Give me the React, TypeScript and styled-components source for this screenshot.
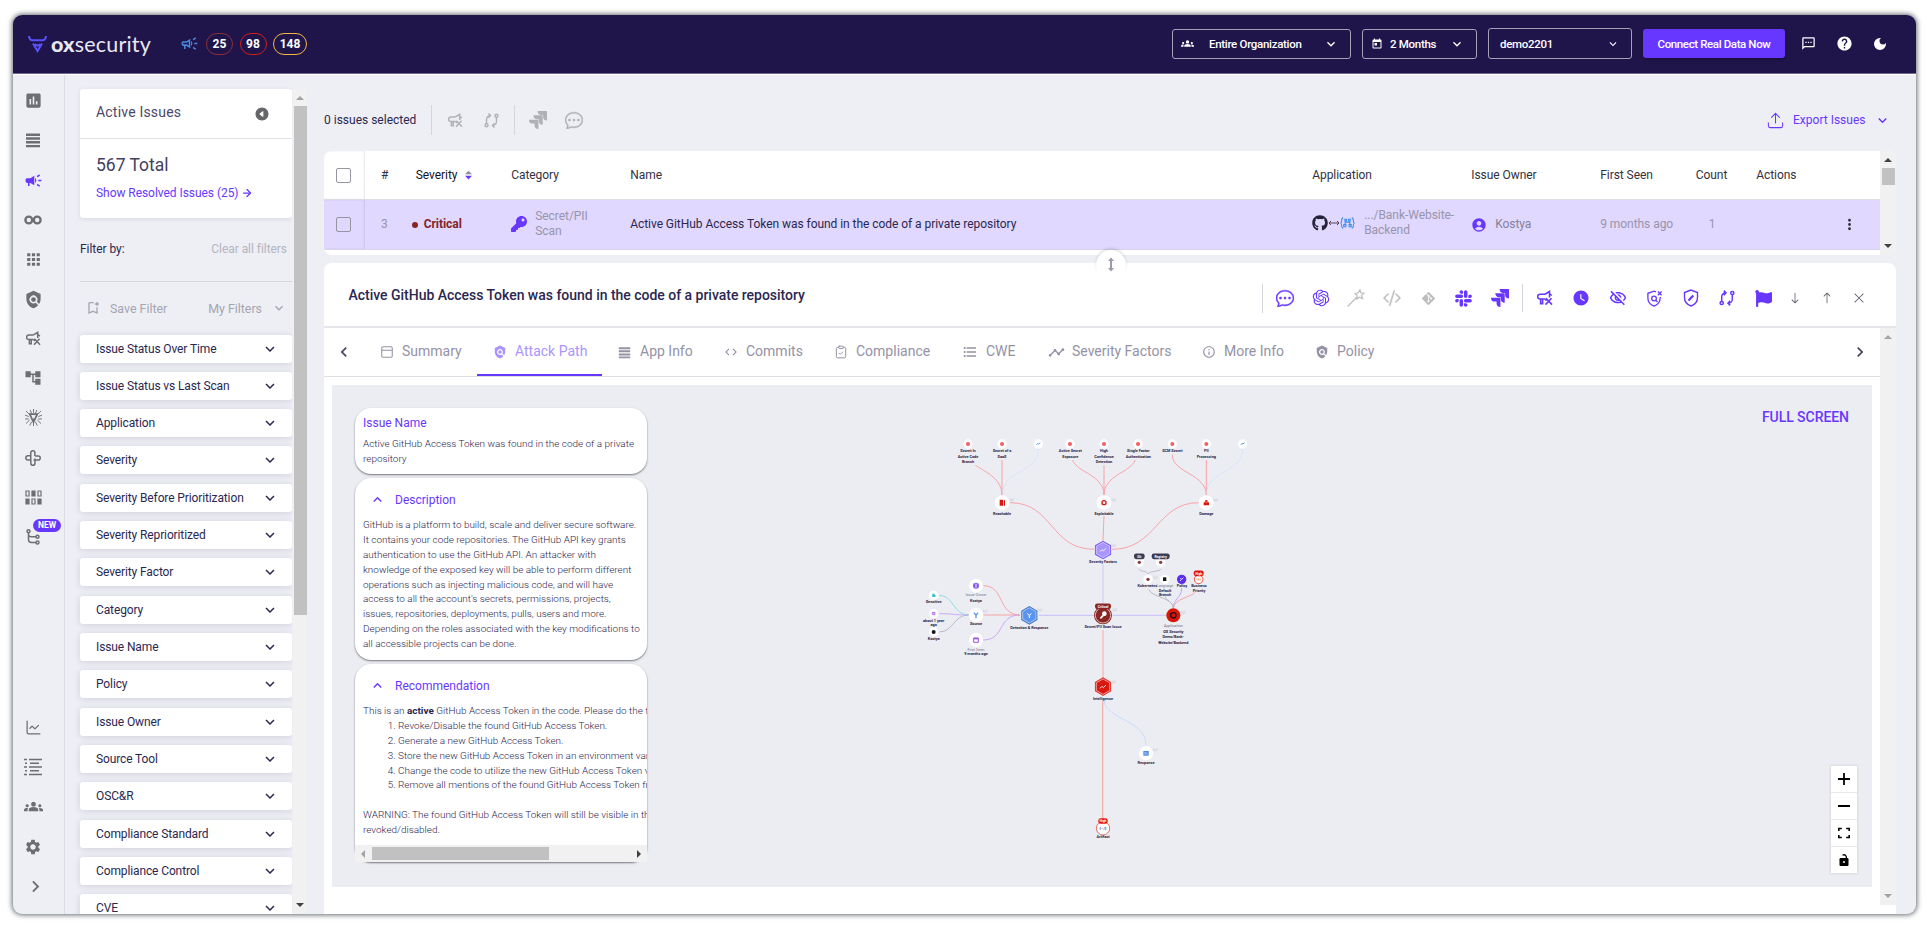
import type { ReactNode } from 'react';
import styled, { createGlobalStyle, css } from 'styled-components';
import {
    MdAccountCircle,
    MdAccountTree,
    MdApps,
    MdAssessment,
    MdCampaign,
    MdChevronLeft,
    MdChevronRight,
    MdCode,
    MdDarkMode,
    MdFormatListBulleted,
    MdGroups,
    MdHelp,
    MdInfoOutline,
    MdKeyboardArrowDown,
    MdKeyboardArrowUp,
    MdMoreVert,
    MdOutlineBookmarkAdd,
    MdOutlineCampaign,
    MdOutlineSms,
    MdOutlineVisibilityOff,
    MdPolicy,
    MdSettings,
    MdTimeline,
    MdToday,
    MdWatchLater,
} from 'react-icons/md';
import { BsArrowDown, BsArrowUp, BsChatDots, BsCodeSlash, BsXLg } from 'react-icons/bs';
import { FaFlag, FaGitAlt, FaGithub, FaKey, FaSlack } from 'react-icons/fa';
import { IoCaretBackCircle } from 'react-icons/io5';
import { RiOpenaiFill } from 'react-icons/ri';
import { ArrowRight, ChartLine, ClipboardCheck, PanelTop, Upload } from 'lucide-react';

const purple = '#6837ff';
const ink = '#2b2750';

/* ---------- custom icons ---------- */

type IconProps = { size?: number };

const JiraIcon = ({ size = 18 }: IconProps) => (
    <svg width={size} height={size} viewBox="0 0 24 24" fill="currentColor">
        <path d="M11.6 11.5H0a5.2 5.2 0 0 0 5.2 5.2h2.2v2.1A5.2 5.2 0 0 0 12.6 24V12.5a1 1 0 0 0-1-1zM17.3 5.8H5.7A5.2 5.2 0 0 0 11 11h2.1v2a5.2 5.2 0 0 0 5.2 5.2V6.8a1 1 0 0 0-1-1zM23 0H11.5a5.2 5.2 0 0 0 5.2 5.2h2.1v2.1A5.2 5.2 0 0 0 24 12.5V1a1 1 0 0 0-1-1z" />
    </svg>
);

const BarsIcon = ({ size = 16 }: IconProps) => (
    <svg width={size} height={size} viewBox="0 0 16 16" fill="currentColor">
        <path d="M1 1.5h14V4H1zM1 5.3h14v2.5H1zM1 9.1h14v2.5H1zM1 12.9h14v2.3H1z" />
    </svg>
);

const LoopIcon = ({ size = 18 }: IconProps) => (
    <svg width={size} height={size} viewBox="0 0 18 18" fill="none" stroke="currentColor" strokeWidth="2.4">
        <circle cx="4.8" cy="9" r="3.4" />
        <circle cx="13.2" cy="9" r="3.4" />
    </svg>
);

const MuteIcon = ({ size = 16 }: IconProps) => (
    <svg width={size} height={size} viewBox="0 0 16 16" fill="none" stroke="currentColor" strokeWidth="1.6">
        <path d="M8 4.2H3A1.6 1.6 0 0 0 3 9h5M8 4.2 12.5 1.5v6M3.6 9v4.6h2V9M8 9l1.6 1.6M8.5 14.6l6-6.4M9 8.2l6 6.4M13 4l1.8 1.5" />
    </svg>
);

const CycleIcon = ({ size = 16 }: IconProps) => (
    <svg width={size} height={size} viewBox="0 0 16 16" fill="none" stroke="currentColor" strokeWidth="1.5">
        <circle cx="2.7" cy="13" r="1.6" />
        <circle cx="13.3" cy="3" r="1.6" />
        <path d="M2.7 11.4V6.8a4 4 0 0 1 4-4M4.8.6 7 2.8 4.8 5.2M13.3 4.6v4.6a4 4 0 0 1-4 4M11.2 10.8 9 13.2l2.2 2.2" />
    </svg>
);

const BurstIcon = ({ size = 18 }: IconProps) => (
    <svg width={size} height={size} viewBox="0 0 18 18" stroke="currentColor" strokeWidth="1" fill="none">
        <path d="M9 0v4M5.5 1 7 5M12.5 1 11 5M1 2l4 4M17 2l-4 4M0 6.5l4 1.5M18 6.5 14 8M0 10.5h4M18 10.5h-4M1 15.5l4-4M17 15.5l-4-4M5 17.5l2-4M13 17.5l-2-4" />
        <path d="M5 5.5h8L9 14z" strokeWidth="1.8" />
        <path d="M9 10v8" />
    </svg>
);

const CloverIcon = ({ size = 17 }: IconProps) => (
    <svg width={size} height={size} viewBox="0 0 17 17" stroke="currentColor" strokeWidth="1.6" fill="none">
        <path d="M10.5 6.5V3a2.2 2.2 0 0 0-4.4 0v7.5M6.5 10.5H3a2.2 2.2 0 0 1 0-4.4h3M6.2 10.5V14a2.2 2.2 0 0 0 4.4 0V9M10.5 6.3H14a2.2 2.2 0 0 1 0 4.4H9" />
    </svg>
);

const BlocksIcon = ({ size = 17 }: IconProps) => (
    <svg width={size} height={size} viewBox="0 0 17 17" stroke="currentColor" strokeWidth="1.2" fill="none">
        <path d="M1 2h3v5H1zM13 2h3v5h-3zM7 10h3v5H7z" />
        <path d="M7 2h3v5H7zM1 10h3v5H1zM13 10h3v5h-3z" fill="currentColor" />
    </svg>
);

const BranchIcon = ({ size = 16 }: IconProps) => (
    <svg width={size} height={size} viewBox="0 0 16 16" stroke="currentColor" strokeWidth="1.5" fill="none">
        <circle cx="3.5" cy="2.3" r="1.5" />
        <circle cx="12.5" cy="7.8" r="1.5" />
        <circle cx="12.5" cy="13.5" r="1.5" />
        <path d="M3.5 4v6.5a3 3 0 0 0 3 3H11M3.5 5.5c0 1.5 1.5 2.3 3 2.3H11" />
    </svg>
);

const OutlineListIcon = ({ size = 18 }: IconProps) => (
    <svg width={size} height={size} viewBox="0 0 18 18" stroke="currentColor" strokeWidth="1.4" fill="none">
        <path d="M0 1.5h3M5 1.5h13M6 5.2h9M0 9h3M5 9h13M6 12.8h9M0 16.5h3M5 16.5h13M1 5.2h2M1 12.8h2" />
    </svg>
);

const WandIcon = ({ size = 18 }: IconProps) => (
    <svg width={size} height={size} viewBox="0 0 18 18" stroke="currentColor" strokeWidth="1.2" fill="none">
        <path d="M.5 17.5 10 8M13 .8l.7 3 3.3.4-2.4 2.2 1 3.2-3-1.3-2.7 1.7.3-3.4L8 4.5l3.2-.7z" />
    </svg>
);

const ShieldEditIcon = ({ size = 18 }: IconProps) => (
    <svg width={size} height={size} viewBox="0 0 18 18" stroke="currentColor" strokeWidth="1.4" fill="none">
        <path d="M9 1 2.5 3.5v5c0 4.2 3 7.3 6.5 8.5 3.5-1.2 6.5-4.3 6.5-8.5v-5z" />
        <path d="m6.5 11.5 4.8-5" strokeWidth="2.2" />
    </svg>
);

const ShieldOffIcon = ({ size = 18 }: IconProps) => (
    <svg width={size} height={size} viewBox="0 0 18 18" stroke="currentColor" strokeWidth="1.4" fill="none">
        <path d="M10.5 2 8.5 1.2 2 3.5v5c0 4.2 3 7.3 6.5 8.5 3.5-1.2 6.5-4.3 6.5-8.5v-1M12.5 1.5l4 4M16.5 1.5l-4 4" />
        <circle cx="8.5" cy="9" r="2.5" />
        <path d="m10.2 10.8 2 2" />
    </svg>
);

const OxMark = () => (
    <svg width="19" height="18" viewBox="0 0 19 18" fill="none" stroke="#5a52ff" strokeWidth="2">
        <path d="M1 1c.2 3 1.5 4.3 4 4.3h9c2.5 0 3.8-1.3 4-4.3" />
        <path d="M5 8.5 9.5 16 14 8.5M6.8 9.3l2.7 1.3 2.7-1.3" />
    </svg>
);

/* ---------- data ---------- */

const navTop: ReactNode[] = [
    <MdAssessment size={19} />,
    <BarsIcon size={16} />,
    <MdCampaign size={19} />,
    <LoopIcon size={18} />,
    <MdApps size={19} />,
    <MdPolicy size={19} />,
    <MuteIcon size={15} />,
    <MdAccountTree size={18} />,
    <BurstIcon size={17} />,
    <CloverIcon size={16} />,
    <BlocksIcon size={17} />,
    <BranchIcon size={16} />,
];

const navBottom: ReactNode[] = [
    <ChartLine size={17} strokeWidth={1.8} />,
    <OutlineListIcon size={18} />,
    <MdGroups size={19} />,
    <MdSettings size={18} />,
    <MdChevronRight size={23} />,
];

const filters = [
    'Issue Status Over Time',
    'Issue Status vs Last Scan',
    'Application',
    'Severity',
    'Severity Before Prioritization',
    'Severity Reprioritized',
    'Severity Factor',
    'Category',
    'Issue Name',
    'Policy',
    'Issue Owner',
    'Source Tool',
    'OSC&R',
    'Compliance Standard',
    'Compliance Control',
    'CVE',
];

const tabs: { label: string; width: number; icon: ReactNode; slot?: number }[] = [
    { label: 'Summary', width: 113, icon: <PanelTop size={14} strokeWidth={1.8} /> },
    { label: 'Attack Path', width: 125, icon: <MdPolicy size={14} /> },
    { label: 'App Info', width: 106, icon: <BarsIcon size={13} /> },
    { label: 'Commits', width: 110, icon: <MdCode size={14} /> },
    { label: 'Compliance', width: 128, icon: <ClipboardCheck size={14} strokeWidth={1.7} /> },
    { label: 'CWE', width: 86, icon: <MdFormatListBulleted size={16} />, slot: 24 },
    { label: 'Severity Factors', width: 154, icon: <MdTimeline size={17} />, slot: 24 },
    { label: 'More Info', width: 113, icon: <MdInfoOutline size={14} /> },
    { label: 'Policy', width: 92, icon: <MdPolicy size={14} /> },
];

const integrations: { icon: ReactNode; muted?: boolean }[] = [
    { icon: <BsChatDots size={18} strokeWidth={0.4} stroke="currentColor" /> },
    { icon: <RiOpenaiFill size={20} /> },
    { icon: <WandIcon size={18} />, muted: true },
    { icon: <BsCodeSlash size={18} strokeWidth={0.4} stroke="currentColor" />, muted: true },
    { icon: <FaGitAlt size={15} />, muted: true },
    { icon: <FaSlack size={19} /> },
    { icon: <JiraIcon size={18} /> },
];

const issueActions: ReactNode[] = [
    <MuteIcon size={16} />,
    <MdWatchLater size={18} />,
    <MdOutlineVisibilityOff size={18} />,
    <ShieldOffIcon size={17} />,
    <ShieldEditIcon size={18} />,
    <CycleIcon size={16} />,
    <FaFlag size={17} />,
];

/* ---------- attack path graph ---------- */

const RED = '#f7a3a6';
const BLUE = '#c9dcfb';
const LILAC = '#cdc8fa';

const edges: { d: string; color: string; dash?: boolean; width?: number }[] = [
    { d: 'M196 136C232 158 276 178 276 226', color: RED },
    { d: 'M276 120V226', color: RED },
    { d: 'M385 88C385 160 276 150 278 222', color: BLUE, dash: true },
    { d: 'M487 120C505 160 582 165 582 226', color: RED },
    { d: 'M582 136V226', color: RED },
    { d: 'M676 120C658 160 582 165 582 226', color: RED },
    { d: 'M787 104C787 160 889 160 889 226', color: RED },
    { d: 'M889 120V226', color: RED },
    { d: 'M998 88C998 160 889 150 890 222', color: BLUE, dash: true },
    { d: 'M300 248C430 248 420 388 552 388', color: RED },
    { d: 'M582 288 579 362', color: RED },
    { d: 'M866 248C740 248 740 388 606 388', color: RED },
    { d: 'M579 434V550', color: LILAC },
    { d: 'M386 586H550', color: LILAC, width: 4 },
    { d: 'M608 586H768', color: LILAC, width: 4 },
    { d: 'M220 497C285 497 262 585 330 585', color: RED },
    { d: 'M220 585H330', color: RED },
    { d: 'M220 660C285 660 262 585 330 585', color: '#c9a8f5' },
    { d: 'M88 526C130 526 130 585 176 585', color: '#8fdbe6' },
    { d: 'M88 581C130 581 130 585 176 585', color: '#c9a8f5' },
    { d: 'M88 636C130 636 130 585 176 585', color: '#b9bac6' },
    { d: 'M686 446C690 456 712 452 714 462', color: '#b9bac6' },
    { d: 'M754 446C750 456 718 452 714 462', color: '#b9bac6' },
    { d: 'M716 508C728 535 788 530 790 565', color: '#b9bac6' },
    { d: 'M766 530C770 545 790 545 790 565', color: '#b9bac6' },
    { d: 'M815 504C815 535 790 535 790 565', color: '#b9a6fb' },
    { d: 'M856 516C845 532 792 535 790 565', color: RED },
    { d: 'M579 630V774', color: '#f7c3c6', width: 5 },
    { d: 'M578 842V1196', color: '#efb0b0', width: 4 },
    { d: 'M582 842C590 900 708 900 708 976', color: BLUE },
];

const labels: { x: number; y: number; lines: string[]; gap?: number; muted?: boolean }[] = [
    { x: 174, y: 97, lines: ['Secret In', 'Active Code', 'Branch'] },
    { x: 276, y: 97, lines: ['Secret of a', 'SaaS'] },
    { x: 481, y: 97, lines: ['Active Secret', 'Exposure'] },
    { x: 582, y: 97, lines: ['High', 'Confidence', 'Detection'] },
    { x: 685, y: 97, lines: ['Single Factor', 'Authentication'] },
    { x: 787, y: 97, lines: ['SCM Secret'] },
    { x: 889, y: 97, lines: ['PII', 'Processing'] },
    { x: 276, y: 285, lines: ['Reachable'] },
    { x: 582, y: 285, lines: ['Exploitable'] },
    { x: 889, y: 285, lines: ['Damage'] },
    { x: 579, y: 430, lines: ['Severity Factors'] },
    { x: 579, y: 624, lines: ['Secret/PII Scan Issue'] },
    { x: 358, y: 626, lines: ['Detection & Response'] },
    { x: 198, y: 529, lines: ['Issue Owner'], muted: true },
    { x: 198, y: 545, lines: ['Kostya'] },
    { x: 198, y: 615, lines: ['Source'] },
    { x: 198, y: 692, lines: ['First Seen'], muted: true },
    { x: 198, y: 705, lines: ['9 months ago'] },
    { x: 71, y: 550, lines: ['Sensitive'] },
    { x: 71, y: 607, lines: ['about 1 year', 'ago'], gap: 12 },
    { x: 71, y: 660, lines: ['Kostya'] },
    { x: 790, y: 621, lines: ['Application'], muted: true },
    { x: 790, y: 638, lines: ['OX Security', 'Demo/Bank-', 'Website/Backend'] },
    { x: 712, y: 502, lines: ['Kubernetes'] },
    { x: 765, y: 502, lines: ['Language'], muted: true },
    { x: 765, y: 517, lines: ['Default', 'Branch'], gap: 12 },
    { x: 816, y: 502, lines: ['Policy'] },
    { x: 867, y: 502, lines: ['Business', 'Priority'], gap: 13 },
    { x: 579, y: 841, lines: ['Intelligence'] },
    { x: 708, y: 1032, lines: ['Response'] },
    { x: 579, y: 1255, lines: ['Artifact'] },
];

const redLeaves = [174, 276, 480, 582, 684, 787, 889];
const blueLeaves = [385, 998];
const markers = [
    [305, 238],
    [611, 238],
    [917, 238],
    [611, 375],
    [614, 568],
    [389, 569],
    [226, 572],
    [736, 471],
    [820, 576],
    [611, 784],
    [736, 988],
];

const hexagon = (x: number, y: number, r: number) =>
    [0, 1, 2, 3, 4, 5]
        .map((i) => {
            const a = Math.PI / 6 + (i * Math.PI) / 3;
            return `${(x + r * Math.cos(a)).toFixed(1)},${(y + r * Math.sin(a)).toFixed(1)}`;
        })
        .join(' ');

const Hex = ({ x, y, fill, border }: { x: number; y: number; fill: string; border: string }) => (
    <>
        <polygon points={hexagon(x, y, 28)} fill={border} />
        <polygon points={hexagon(x, y, 23)} fill={fill} stroke="#fff" strokeOpacity="0.8" strokeWidth="2" />
    </>
);

const Badge = ({ x, y, w, fill, text }: { x: number; y: number; w: number; fill: string; text: string }) => (
    <>
        <rect x={x - w / 2} y={y - 8.5} width={w} height={17} rx={7} fill={fill} />
        <BadgeText x={x} y={y + 4}>
            {text}
        </BadgeText>
    </>
);

const AttackGraph = () => (
    <Graph viewBox="0 0 1540 502">
        <g transform="translate(578 35) scale(.33333)">
            {edges.map((e) => (
                <path
                    key={e.d}
                    d={e.d}
                    fill="none"
                    stroke={e.color}
                    strokeWidth={e.width ?? 3}
                    strokeDasharray={e.dash ? '5 4' : undefined}
                />
            ))}
            {redLeaves.map((x) => (
                <g key={x}>
                    <circle cx={x} cy={72} r={14} fill="#fff" />
                    <circle cx={x} cy={72} r={6} fill="#f95c5f" />
                </g>
            ))}
            {blueLeaves.map((x) => (
                <g key={x}>
                    <circle cx={x} cy={72} r={14} fill="#fff" />
                    <path d={`M${x - 6} 74l4-3 3 1 5-4`} stroke="#5b97f0" strokeWidth="3" fill="none" />
                </g>
            ))}
            {[276, 582, 889].map((x) => (
                <circle key={x} cx={x} cy={248} r={22} fill="#fff" />
            ))}
            <path d="M269 239h10v18h-10zM281 241h4v16h-4z" fill="#d9180f" />
            <circle cx={582} cy={248} r={6} fill="none" stroke="#d9180f" strokeWidth="4" />
            <path d="M881 247h16v9h-16zM884 245a5 5 0 0 1 10 0z" fill="#d9180f" />

            <Hex x={579} y={390} fill="#a995ff" border="#7f59fb" />
            <path d="M570 395l6-6 4 4 8-8" stroke="#fff" strokeWidth="2.5" fill="none" />
            <Hex x={358} y={586} fill="#5a94ee" border="#3f76c4" />
            <path d="M352 580l6 7 6-7M358 587v7" stroke="#fff" strokeWidth="3" fill="none" />
            <Hex x={579} y={800} fill="#d9180f" border="#e2322a" />
            <path d="M570 805l6-6 4 4 8-8" stroke="#fff" strokeWidth="2.5" fill="none" />

            <circle cx={579} cy={586} r={27} fill="#8a2626" />
            <circle cx={579} cy={586} r={23} fill="none" stroke="#fff" strokeWidth="2" />
            <path d="M571 595l9-9" stroke="#fff" strokeWidth="5" />
            <circle cx={583} cy={581} r={7} fill="#fff" />
            <Badge x={579} y={559} w={48} fill="#8a2626" text="Critical" />

            <circle cx={198} cy={497} r={21} fill="#fff" />
            <circle cx={198} cy={497} r={9} fill="#8257f7" />
            <path d="M198 491v12" stroke="#fff" strokeWidth="3" />
            <circle cx={198} cy={585} r={21} fill="#fff" />
            <path d="M192 578l6 8 6-8M198 586v9" stroke="#5a94ee" strokeWidth="4" fill="none" />
            <circle cx={198} cy={660} r={21} fill="#fff" />
            <path d="M191 654h14v13h-14z" stroke="#a04fe6" strokeWidth="3" fill="none" />
            <path d="M191 656h14" stroke="#a04fe6" strokeWidth="4" />

            <circle cx={71} cy={526} r={14} fill="#fff" />
            <path d="M67 521h5l4 5v5h-9z" fill="#22c3cf" />
            <circle cx={71} cy={581} r={14} fill="#fff" />
            <path d="M67 577h8v7h-8z" fill="#d9b8f7" stroke="#a04fe6" strokeWidth="2" />
            <circle cx={71} cy={636} r={14} fill="#fff" />
            <circle cx={71} cy={636} r={6} fill="#161616" />

            <circle cx={790} cy={586} r={21} fill="#dc1507" />
            <circle cx={790} cy={586} r={8} fill="none" stroke="#14101c" strokeWidth="4" />

            {[688, 752].map((x) => (
                <g key={x}>
                    <circle cx={x} cy={427} r={14} fill="#fff" />
                    <circle cx={x} cy={427} r={5} fill="#8a3a3a" />
                </g>
            ))}
            <Badge x={688} y={409} w={32} fill="#3c3a50" text="Git" />
            <Badge x={752} y={409} w={54} fill="#3c3a50" text="Registry" />
            <circle cx={714} cy={478} r={14} fill="#fff" />
            <circle cx={714} cy={478} r={5} fill="#8a3a3a" />
            <circle cx={764} cy={478} r={14} fill="#fff" />
            <path d="M759 472h10v11h-10z" fill="#161616" />
            <circle cx={815} cy={478} r={14} fill="#5b2df0" />
            <path d="M810 483l10-10M811 474l3 3" stroke="#fff" strokeWidth="2.5" />
            <circle cx={866} cy={478} r={13} fill="#fff" stroke="#e2322a" strokeWidth="2.5" />
            <path d="M860 478h12" stroke="#f39a4c" strokeWidth="5" strokeDasharray="3 1.5" />
            <Badge x={866} y={460} w={30} fill="#dc1507" text="High" />

            <circle cx={708} cy={1000} r={21} fill="#fff" />
            <rect x={700} y={993} width={16} height={14} fill="#4b86ea" />
            <path d="M703 998h7M703 1002h10" stroke="#fff" strokeWidth="1.5" />
            <circle cx={579} cy={1225} r={20} fill="#fff" stroke="#e2504a" strokeWidth="2.5" />
            <MarkText x={579} y={1230}>
                {'{··/}'}
            </MarkText>
            <Badge x={579} y={1203} w={28} fill="#dc1507" text="High" />

            {markers.map(([x, y]) => (
                <path
                    key={`${x}-${y}`}
                    d={`M${x - 5} ${y - 4}v8h10v-8M${x - 2} ${y}h4`}
                    stroke="#c2c3cc"
                    strokeWidth="1.5"
                    fill="none"
                />
            ))}
            {labels.map((l) =>
                l.lines.map((line, i) => (
                    <NodeLabel key={`${l.x}-${l.y}-${line}`} x={l.x} y={l.y + i * (l.gap ?? 16.5)} $muted={l.muted}>
                        {line}
                    </NodeLabel>
                )),
            )}
        </g>
    </Graph>
);

/* ---------- page ---------- */

function App() {
    return (
        <Page>
            <GlobalStyle />
            <Window>
                <Header>
                    <Logo>
                        <OxMark />
                        <Wordmark>
                            <b>ox</b>security
                        </Wordmark>
                    </Logo>
                    <HeaderCampaign>
                        <MdOutlineCampaign size={19} />
                    </HeaderCampaign>
                    <Pill $color="#8c2f35">25</Pill>
                    <Pill $color="#d51d12">98</Pill>
                    <Pill $color="#f4b740" $wide>
                        148
                    </Pill>
                    <HeaderRight>
                        <Select $width={179}>
                            <MdGroups size={13} />
                            <SelectLabel $indent={15}>Entire Organization</SelectLabel>
                            <MdKeyboardArrowDown size={16} />
                        </Select>
                        <Select $width={115}>
                            <MdToday size={12} />
                            <SelectLabel $indent={7}>2 Months</SelectLabel>
                            <MdKeyboardArrowDown size={16} />
                        </Select>
                        <Select $width={144} $tall>
                            <SelectLabel $indent={3}>demo2201</SelectLabel>
                            <MdKeyboardArrowDown size={14} />
                        </Select>
                        <ConnectButton>Connect Real Data Now</ConnectButton>
                        <HeaderIcons>
                            <span>
                                <MdOutlineSms size={15} />
                            </span>
                            <span>
                                <MdHelp size={17} />
                            </span>
                            <span>
                                <MdDarkMode size={16} />
                            </span>
                        </HeaderIcons>
                    </HeaderRight>
                </Header>
                <Body>
                    <Nav>
                        <div>
                            {navTop.map((icon, i) => (
                                <NavItem key={i} $active={i === 2}>
                                    {icon}
                                    {i === navTop.length - 1 && <NewBadge>NEW</NewBadge>}
                                </NavItem>
                            ))}
                        </div>
                        <NavBottom>
                            {navBottom.map((icon, i) => (
                                <NavItem key={i}>{icon}</NavItem>
                            ))}
                        </NavBottom>
                    </Nav>
                    <Sidebar>
                        <TotalsCard>
                            <TotalsHead>
                                Active Issues
                                <IoCaretBackCircle size={16} />
                            </TotalsHead>
                            <TotalsBody>
                                <Total>567 Total</Total>
                                <ResolvedLink>
                                    Show Resolved Issues (25)
                                    <ArrowRight size={12} strokeWidth={2.5} />
                                </ResolvedLink>
                            </TotalsBody>
                        </TotalsCard>
                        <FilterBy>
                            Filter by:
                            <span>Clear all filters</span>
                        </FilterBy>
                        <FilterTools>
                            <MdOutlineBookmarkAdd size={16} />
                            <span>Save Filter</span>
                            <em>My Filters</em>
                            <MdKeyboardArrowDown size={16} />
                        </FilterTools>
                        <FilterList>
                            {filters.map((name) => (
                                <FilterItem key={name}>
                                    {name}
                                    <MdKeyboardArrowDown size={18} />
                                </FilterItem>
                            ))}
                        </FilterList>
                    </Sidebar>
                    <SideScroll>
                        <Arrow $dir="up" $muted />
                        <Thumb $height={509} />
                        <Spacer />
                        <Arrow $dir="down" />
                    </SideScroll>
                    <Main>
                        <Toolbar>
                            <Selected>0 issues selected</Selected>
                            <Divider $height={30} />
                            <ToolIcon>
                                <MuteIcon size={15} />
                            </ToolIcon>
                            <ToolIcon>
                                <CycleIcon size={15} />
                            </ToolIcon>
                            <Divider $height={30} />
                            <ToolIcon>
                                <JiraIcon size={18} />
                            </ToolIcon>
                            <ToolIcon>
                                <BsChatDots size={18} strokeWidth={0.4} stroke="currentColor" />
                            </ToolIcon>
                            <Export>
                                <Upload size={19} strokeWidth={1.3} />
                                Export Issues
                                <MdKeyboardArrowDown size={17} />
                            </Export>
                        </Toolbar>
                        <TableBox>
                            <Table>
                                <TableHead>
                                    <CheckCell>
                                        <Checkbox />
                                    </CheckCell>
                                    <NumCell>#</NumCell>
                                    <Cell $strong>
                                        Severity
                                        <SortIcon viewBox="0 0 8 10">
                                            <path d="M4 0l4 4H0z" fill="#8d8d98" />
                                            <path d="M4 10l4-4.2H0z" fill={purple} />
                                        </SortIcon>
                                    </Cell>
                                    <Cell>Category</Cell>
                                    <Cell>Name</Cell>
                                    <Cell>Application</Cell>
                                    <Cell>Issue Owner</Cell>
                                    <Cell>First Seen</Cell>
                                    <Cell>Count</Cell>
                                    <Cell>Actions</Cell>
                                </TableHead>
                                <TableRow>
                                    <CheckCell>
                                        <Checkbox />
                                    </CheckCell>
                                    <NumCell>3</NumCell>
                                    <Critical>Critical</Critical>
                                    <Category>
                                        <FaKey size={16} />
                                        <span>
                                            Secret/PII
                                            <br />
                                            Scan
                                        </span>
                                    </Category>
                                    <Cell $dark>Active GitHub Access Token was found in the code of a private repository</Cell>
                                    <AppCell>
                                        <FaGithub size={16} />
                                        <LinkArrow viewBox="0 0 12 8">
                                            <path d="M1 4h10M3 2 1 4l2 2M9 2l2 2-2 2" />
                                        </LinkArrow>
                                        <RepoMark viewBox="0 0 14 11">
                                            <path d="M3 .7C.5.7 2.5 5 .5 5.5c2 .5 0 4.8 2.5 4.8M11 .7c2.5 0 .5 4.3 2.5 4.8-2 .5 0 4.8-2.5 4.8" />
                                            <path d="M4.5 2h1.600v1.600H4.500zM8 2h1.600v1.600H8zM3.500 7h2v2h-2zM8.500 7h2v2h-2zM5.300 3.600 4.500 7M8.800 3.600 9.500 7M5.300 4.800h3.500" />
                                        </RepoMark>
                                        <span>
                                            .../Bank-Website-
                                            <br />
                                            Backend
                                        </span>
                                    </AppCell>
                                    <Owner>
                                        <MdAccountCircle size={16} />
                                        Kostya
                                    </Owner>
                                    <Cell $gray>9 months ago</Cell>
                                    <Count>1</Count>
                                    <MoreCell>
                                        <MdMoreVert size={17} />
                                    </MoreCell>
                                </TableRow>
                            </Table>
                            <PaneScroll>
                                <Arrow $dir="up" />
                                <Thumb $height={17} />
                                <Spacer />
                                <Arrow $dir="down" />
                            </PaneScroll>
                        </TableBox>
                        <Detail>
                            <ResizeHandle>
                                <svg width="8" height="15" viewBox="0 0 8 15" fill="none" stroke="#9a99ad" strokeWidth="2">
                                    <path d="M4 2v11" />
                                    <path d="M4 .5 7 4H1zM4 14.5 7 11H1z" fill="#9a99ad" stroke="none" />
                                </svg>
                            </ResizeHandle>
                            <DetailHead>
                                <h2>Active GitHub Access Token was found in the code of a private repository</h2>
                                <Actions>
                                    <Divider $height={29} />
                                    {integrations.map((item, i) => (
                                        <ActionIcon key={i} $muted={item.muted}>
                                            {item.icon}
                                        </ActionIcon>
                                    ))}
                                    <Divider $height={28} />
                                    {issueActions.map((icon, i) => (
                                        <ActionIcon key={i} $wide>
                                            {icon}
                                        </ActionIcon>
                                    ))}
                                    <PlainIcon>
                                        <BsArrowDown size={12} />
                                    </PlainIcon>
                                    <PlainIcon>
                                        <BsArrowUp size={12} />
                                    </PlainIcon>
                                    <PlainIcon>
                                        <BsXLg size={12} />
                                    </PlainIcon>
                                </Actions>
                            </DetailHead>
                            <DetailBody>
                                <DetailContent>
                                    <Tabs>
                                        <TabArrow>
                                            <MdChevronLeft size={20} />
                                        </TabArrow>
                                        {tabs.map((tab) => (
                                            <Tab key={tab.label} $width={tab.width} $active={tab.label === 'Attack Path'}>
                                                <TabIcon $slot={tab.slot ?? 22}>{tab.icon}</TabIcon>
                                                {tab.label}
                                            </Tab>
                                        ))}
                                        <TabArrow $right>
                                            <MdChevronRight size={20} />
                                        </TabArrow>
                                    </Tabs>
                                    <Canvas>
                                        <AttackGraph />
                                        <Cards>
                                            <Card $height={66}>
                                                <CardTitle>Issue Name</CardTitle>
                                                <CardText>
                                                    Active GitHub Access Token was found in the code of a private
                                                    <br />
                                                    repository
                                                </CardText>
                                            </Card>
                                            <Card $height={182}>
                                                <CardToggle>
                                                    <MdKeyboardArrowUp size={17} />
                                                    Description
                                                </CardToggle>
                                                <CardText>
                                                    GitHub is a platform to build, scale and deliver secure software.
                                                    <br />
                                                    It contains your code repositories. The GitHub API key grants
                                                    <br />
                                                    authentication to use the GitHub API. An attacker with
                                                    <br />
                                                    knowledge of the exposed key will be able to perform different
                                                    <br />
                                                    operations such as injecting malicious code, and will have
                                                    <br />
                                                    access to all the account's secrets, permissions, projects,
                                                    <br />
                                                    issues, repositories, deployments, pulls, users and more.
                                                    <br />
                                                    Depending on the roles associated with the key modifications to
                                                    <br />
                                                    all accessible projects can be done.
                                                </CardText>
                                            </Card>
                                            <Card $height={198}>
                                                <CardToggle>
                                                    <MdKeyboardArrowUp size={17} />
                                                    Recommendation
                                                </CardToggle>
                                                <CardText $clip>
                                                    This is an <b>active</b> GitHub Access Token in the code. Please do the following:
                                                    <Steps>
                                                        <li>Revoke/Disable the found GitHub Access Token.</li>
                                                        <li>Generate a new GitHub Access Token.</li>
                                                        <li>Store the new GitHub Access Token in an environment variable.</li>
                                                        <li>Change the code to utilize the new GitHub Access Token value.</li>
                                                        <li>Remove all mentions of the found GitHub Access Token from code.</li>
                                                    </Steps>
                                                    <br />
                                                    WARNING: The found GitHub Access Token will still be visible in the
                                                    <br />
                                                    revoked/disabled.
                                                </CardText>
                                                <CardScroll>
                                                    <Arrow $dir="left" $muted />
                                                    <CardThumb />
                                                    <Spacer />
                                                    <Arrow $dir="right" />
                                                </CardScroll>
                                            </Card>
                                        </Cards>
                                        <CanvasSide>
                                            <FullScreen>FULL SCREEN</FullScreen>
                                            <Controls>
                                                <button>
                                                    <svg width="12" height="12" viewBox="0 0 12 12">
                                                        <path d="M6 0v12M0 6h12" stroke="#000" strokeWidth="1.8" />
                                                    </svg>
                                                </button>
                                                <button>
                                                    <svg width="12" height="12" viewBox="0 0 12 12">
                                                        <path d="M0 6h12" stroke="#000" strokeWidth="2" />
                                                    </svg>
                                                </button>
                                                <button>
                                                    <svg width="12" height="12" viewBox="0 0 12 12" fill="none" stroke="#000" strokeWidth="1.6">
                                                        <path d="M.8 4V1.5h3M8.2 1.5h3V4M11.2 8v2.5h-3M3.8 10.5h-3V8" />
                                                    </svg>
                                                </button>
                                                <button>
                                                    <svg width="12" height="12" viewBox="0 0 12 12">
                                                        <rect x="1.5" y="4" width="9" height="8" rx="1.2" />
                                                        <path d="M4.5 1.2C7 0 8.5 1.5 8.5 4.2" stroke="#000" strokeWidth="1.3" fill="none" />
                                                        <circle cx="6" cy="8" r="1" fill="#fff" />
                                                    </svg>
                                                </button>
                                            </Controls>
                                        </CanvasSide>
                                    </Canvas>
                                </DetailContent>
                                <PaneScroll $height={577}>
                                    <Arrow $dir="up" $muted />
                                    <Spacer />
                                    <Arrow $dir="down" $muted />
                                </PaneScroll>
                            </DetailBody>
                        </Detail>
                    </Main>
                </Body>
            </Window>
        </Page>
    );
}

export default App;

const GlobalStyle = createGlobalStyle`
    * {
        box-sizing: border-box;
    }
    body {
        margin: 0;
        background: #fff;
        font-family: Roboto, 'Liberation Sans', sans-serif;
        font-size: 12px;
        color: ${ink};
    }
    button {
        font: inherit;
        border: 0;
        padding: 0;
    }
    svg {
        flex: none;
    }
`;

const Page = styled.div`
    width: 1930px;
    height: 930px;
    padding: 15px 14px 16px 13px;
    overflow: hidden;
`;

const Window = styled.div`
    display: flex;
    flex-direction: column;
    height: 899px;
    border-radius: 9px;
    background: #eeeff5;
    overflow: hidden;
    box-shadow: 0 0 5px 1px rgba(50, 56, 60, 0.75);
`;

const Header = styled.header`
    display: flex;
    align-items: center;
    flex: none;
    height: 59px;
    padding: 0 18px 1px 15px;
    background: #1f154b;
    border-bottom: 1px solid #6d6791;
    color: #fff;
`;

const Logo = styled.div`
    display: flex;
    align-items: center;
    gap: 4px;
    width: 152px;
`;

const Wordmark = styled.span`
    font-family: Lato, sans-serif;
    font-size: 21.5px;
    font-weight: 400;
    line-height: 24px;
    color: #e9e8f0;
    letter-spacing: 0.2px;

    b {
        font-weight: 900;
    }
`;

const HeaderCampaign = styled.span`
    display: flex;
    width: 26px;
    color: #4a86dd;
`;

const Pill = styled.span<{ $color: string; $wide?: boolean }>`
    display: flex;
    align-items: center;
    justify-content: center;
    width: ${({ $wide }) => ($wide ? 34 : 27)}px;
    height: 22px;
    margin-right: 6.5px;
    border: 1px solid ${({ $color }) => $color};
    border-radius: 11px;
    font-weight: 700;
`;

const HeaderRight = styled.div`
    display: flex;
    align-items: center;
    margin-left: auto;
`;

const Select = styled.div<{ $width: number; $tall?: boolean }>`
    display: flex;
    align-items: center;
    width: ${({ $width }) => $width}px;
    height: ${({ $tall }) => ($tall ? 31 : 30)}px;
    margin-right: 11px;
    padding: 0 11px 0 8px;
    border: 1px solid #a5a1b7;
    border-radius: 3px;
    font-weight: 500;
`;

const SelectLabel = styled.span<{ $indent: number }>`
    flex: 1;
    padding-left: ${({ $indent }) => $indent}px;
    font-size: 11.5px;
    letter-spacing: -0.3px;
`;

const ConnectButton = styled.button`
    width: 142px;
    height: 29px;
    margin-right: 5px;
    border-radius: 3px;
    background: ${purple};
    color: #fff;
    font-size: 11.5px;
    font-weight: 500;
    letter-spacing: -0.38px;
    box-shadow: 0 1px 3px rgba(0, 0, 0, 0.4);
`;

const HeaderIcons = styled.div`
    display: flex;

    span {
        display: flex;
        justify-content: center;
        align-items: center;
        width: 36px;
    }
`;

const Body = styled.div`
    display: flex;
    flex: 1;
    min-height: 0;
    border-top: 1px solid #fff;
`;

const Nav = styled.nav`
    display: flex;
    flex-direction: column;
    justify-content: space-between;
    width: 52px;
    padding: 6px 11px 8px 0;
    border-right: 1px solid #dcdde4;
`;

const NavItem = styled.div<{ $active?: boolean }>`
    position: relative;
    display: flex;
    align-items: center;
    justify-content: center;
    height: 39.65px;
    color: ${({ $active }) => ($active ? purple : '#6e6e72')};
`;

const NavBottom = styled.div`
    ${NavItem}:last-child {
        padding-left: 4px;
    }
`;

const NewBadge = styled.span`
    position: absolute;
    left: 20px;
    top: 2px;
    width: 28px;
    height: 13px;
    border-radius: 7px;
    background: ${purple};
    color: #fff;
    font-size: 8.5px;
    font-weight: 700;
    line-height: 13px;
    text-align: center;
`;

const Sidebar = styled.aside`
    width: 227px;
    padding: 14px 0 0 15px;
    overflow: hidden;
`;

const TotalsCard = styled.section`
    height: 129px;
    border-radius: 3px;
    background: #fff;
    box-shadow: 0 1px 4px rgba(40, 40, 80, 0.12);
`;

const TotalsHead = styled.div`
    display: flex;
    justify-content: space-between;
    align-items: center;
    height: 50px;
    padding: 0 22px 4px 16px;
    border-bottom: 1px solid #e0e0e6;
    font-size: 14px;
    color: #4b4868;
    letter-spacing: 0.2px;

    svg {
        margin-top: 4px;
        color: #67676b;
    }
`;

const TotalsBody = styled.div`
    padding: 14px 16px;
`;

const Total = styled.div`
    font-size: 17.5px;
    line-height: 24px;
    color: #43405f;
`;

const ResolvedLink = styled.a`
    display: flex;
    align-items: center;
    gap: 3px;
    margin-top: 8px;
    line-height: 16px;
    letter-spacing: -0.05px;
    color: ${purple};
`;

const FilterBy = styled.div`
    display: flex;
    justify-content: space-between;
    align-items: center;
    height: 64px;
    padding: 0 5px 1px 0;
    border-bottom: 1px solid #d7d8de;
    letter-spacing: -0.05px;

    span {
        color: #b4b4bd;
    }
`;

const FilterTools = styled.div`
    display: flex;
    align-items: center;
    height: 52.5px;
    padding: 0 5px;
    font-size: 12.4px;
    color: #a5a5af;

    span {
        flex: 1;
        padding-left: 9px;
    }

    em {
        padding-right: 9px;
        font-style: normal;
    }
`;

const FilterList = styled.div`
    display: flex;
    flex-direction: column;
    gap: 9.33px;
`;

const FilterItem = styled.div`
    display: flex;
    flex: none;
    justify-content: space-between;
    align-items: center;
    height: 28px;
    padding: 0 13px 0 16px;
    border-radius: 3px;
    background: #fff;
    letter-spacing: -0.12px;
    box-shadow: 0 1px 6px rgba(40, 40, 80, 0.16);
`;

const Spacer = styled.div`
    flex: 1;
`;

const SideScroll = styled.div`
    display: flex;
    flex-direction: column;
    align-items: center;
    width: 14px;
    margin: 14px 0 0 1px;
    padding: 7px 0;
    background: #f1f1f1;
`;

const arrows = {
    up: css`
        border-width: 0 4px 4px;
        border-bottom-color: currentColor;
    `,
    down: css`
        border-width: 4px 4px 0;
        border-top-color: currentColor;
    `,
    left: css`
        border-width: 4px 4px 4px 0;
        border-right-color: currentColor;
    `,
    right: css`
        border-width: 4px 0 4px 4px;
        border-left-color: currentColor;
    `,
};

const Arrow = styled.i<{ $dir: keyof typeof arrows; $muted?: boolean }>`
    flex: none;
    width: 0;
    height: 0;
    border: 0 solid transparent;
    color: ${({ $muted }) => ($muted ? '#a3a3a3' : '#404040')};
    ${({ $dir }) => arrows[$dir]}
`;

const Thumb = styled.div<{ $height: number }>`
    width: 13px;
    height: ${({ $height }) => $height}px;
    margin-top: 6px;
    background: #c1c1c1;
`;

const Main = styled.main`
    display: flex;
    flex-direction: column;
    width: 1572px;
    margin-left: 17px;
`;

const Toolbar = styled.div`
    display: flex;
    align-items: center;
    flex: none;
    height: 76px;
    padding-top: 14px;
    color: #b0b0b6;
`;

const Selected = styled.span`
    width: 107px;
    color: ${ink};
`;

const Divider = styled.i<{ $height: number }>`
    width: 1px;
    height: ${({ $height }) => $height}px;
    background: #d4d5db;
`;

const ToolIcon = styled.span`
    display: flex;
    justify-content: center;
    width: 36px;

    ${Divider} + & {
        margin-left: 5px;
    }

    & + ${Divider} {
        margin-left: 4.5px;
    }
`;

const Export = styled.div`
    display: flex;
    align-items: center;
    gap: 8px;
    margin-left: auto;
    padding-right: 5.5px;
    color: ${purple};
`;

const TableBox = styled.section`
    display: flex;
    flex: none;
    height: 104px;
    border-radius: 8px;
    background: #fff;
    overflow: hidden;
`;

const Table = styled.div`
    width: 1556px;
`;

const TableHead = styled.div`
    display: grid;
    grid-template-columns: 41px 50.7px 95.5px 119px 682px 159px 129px 95.5px 60.5px 1fr;
    height: 49px;
    border-bottom: 1px solid #dcdce3;
    color: #33313f;
`;

const TableRow = styled(TableHead)`
    height: 50px;
    background: #e0d8fe;
    border-bottom-color: #d9d3ee;
`;

const Cell = styled.div<{ $strong?: boolean; $dark?: boolean; $gray?: boolean }>`
    display: flex;
    align-items: center;
    white-space: nowrap;
    letter-spacing: -0.05px;
    font-weight: 400;
    ${({ $strong }) => $strong && 'color: #15131f;'}
    ${({ $dark }) => $dark && `color: ${ink};`}
    ${({ $gray }) => $gray && 'color: #9794ab;'}

    ${TableRow} & {
        padding-bottom: 1px;
    }
`;

const CheckCell = styled.div`
    display: flex;
    align-items: center;
    padding-left: 12px;
    box-shadow: inset -1px 0 2px rgba(60, 50, 100, 0.12);
`;

const Checkbox = styled.i`
    width: 15px;
    height: 15px;
    border: 1.5px solid #97959f;
    border-radius: 2px;
`;

const NumCell = styled(Cell)`
    padding-left: 16px;

    ${TableRow} & {
        color: #9794ab;
    }
`;

const SortIcon = styled.svg`
    width: 7px;
    height: 10px;
    margin-left: 8px;
`;

const Critical = styled(Cell)`
    font-weight: 700;
    color: #862428;
    margin-left: -4px;

    &::before {
        content: '';
        width: 6px;
        height: 6px;
        margin: 2px 6px 0 0;
        border-radius: 50%;
        background: currentColor;
    }
`;

const Category = styled(Cell)`
    gap: 8px;
    line-height: 15px;
    color: #9794ab;

    svg {
        color: ${purple};
    }
`;

const AppCell = styled(Cell)`
    line-height: 15px;
    color: #9794ab;

    ${TableRow} & {
        padding-bottom: 4px;
    }

    > svg:first-child {
        color: #25223a;
    }

    span {
        margin-left: 9px;
    }
`;

const LinkArrow = styled.svg`
    width: 12px;
    height: 8px;
    fill: none;
    stroke: #5d3f52;
    stroke-width: 1;
`;

const RepoMark = styled.svg`
    width: 15px;
    height: 12px;
    fill: none;
    stroke: #3d8bf0;
    stroke-width: 1;
`;

const Owner = styled(Cell)`
    gap: 8px;
    color: #84819c;

    svg {
        margin-top: 2px;
        color: ${purple};
    }
`;

const Count = styled(Cell)`
    padding-left: 13px;
    color: #9794ab;
`;

const MoreCell = styled(Cell)`
    padding-left: 85px;
`;

const PaneScroll = styled.div<{ $height?: number }>`
    display: flex;
    flex-direction: column;
    align-items: center;
    width: 16px;
    height: ${({ $height }) => ($height ? `${$height}px` : 'auto')};
    padding: 7px 0;
    background: #f1f1f1;
`;

const Detail = styled.section`
    position: relative;
    display: flex;
    flex-direction: column;
    flex: 1;
    min-height: 0;
    margin-top: 8px;
    border-radius: 8px 8px 0 0;
    background: #fff;
`;

const ResizeHandle = styled.div`
    position: absolute;
    left: 772px;
    top: -13px;
    display: flex;
    justify-content: center;
    width: 30px;
    height: 30px;
    padding-top: 7px;
    border-radius: 50%;
    background: #fff;
    box-shadow: 0 -2px 3px rgba(0, 0, 0, 0.12);
`;

const DetailHead = styled.div`
    display: flex;
    justify-content: space-between;
    align-items: center;
    flex: none;
    height: 65px;
    padding: 0 21px 0 24px;
    border-bottom: 2px solid #e6e6ea;

    h2 {
        margin: 1px 0 0 0.5px;
        font-size: 14px;
        font-weight: 500;
        letter-spacing: -0.02px;
    }
`;

const Actions = styled.div`
    display: flex;
    align-items: center;
    padding-top: 7px;

    ${Divider} {
        margin: 0 4px;
    }
`;

const ActionIcon = styled.span<{ $muted?: boolean; $wide?: boolean }>`
    display: flex;
    justify-content: center;
    width: ${({ $wide }) => ($wide ? 36.5 : 35.8)}px;
    color: ${({ $muted }) => ($muted ? '#bdbdbf' : purple)};
`;

const PlainIcon = styled.span`
    display: flex;
    justify-content: center;
    width: 32px;
    color: #555560;

    ${ActionIcon} + & {
        margin-left: -3px;
    }
`;

const DetailBody = styled.div`
    display: flex;
    flex: 1;
    min-height: 0;
`;

const DetailContent = styled.div`
    width: 1556px;
`;

const Tabs = styled.div`
    display: flex;
    height: 49px;
    border-bottom: 1px solid #dedee4;
`;

const TabArrow = styled.span<{ $right?: boolean }>`
    display: flex;
    align-items: center;
    width: 40px;
    padding-left: 10px;
    color: #45425f;
    ${({ $right }) => $right && 'margin-left: auto;'}
`;

const Tab = styled.div<{ $width: number; $active?: boolean }>`
    display: flex;
    align-items: center;
    flex: none;
    width: ${({ $width }) => $width}px;
    padding-left: 16px;
    border-bottom: 2px solid ${({ $active }) => ($active ? purple : 'transparent')};
    color: ${({ $active }) => ($active ? '#ab94ff' : '#9492a5')};
    font-size: 14px;
    white-space: nowrap;
`;

const TabIcon = styled.span<{ $slot: number }>`
    display: flex;
    width: ${({ $slot }) => $slot}px;
    padding-top: 2px;
`;

const Canvas = styled.div`
    position: relative;
    display: flex;
    justify-content: space-between;
    width: 1540px;
    height: 502px;
    margin: 8px 0 0 8px;
    background: #ecedf3;
`;

const Graph = styled.svg`
    position: absolute;
    left: 0;
    top: 0;
    width: 1540px;
    height: 502px;
`;

const NodeLabel = styled.text<{ $muted?: boolean }>`
    font-size: 11.5px;
    font-weight: ${({ $muted }) => ($muted ? 400 : 700)};
    fill: ${({ $muted }) => ($muted ? '#77758a' : '#1f1b45')};
    text-anchor: middle;
`;

const BadgeText = styled.text`
    font-size: 10px;
    font-weight: 700;
    fill: #fff;
    text-anchor: middle;
`;

const MarkText = styled(BadgeText)`
    font-size: 13px;
    fill: #4d4a66;
`;

const Cards = styled.div`
    display: flex;
    flex-direction: column;
    gap: 4px;
    padding: 23px 0 0 23px;
    z-index: 1;
`;

const Card = styled.section<{ $height: number }>`
    display: flex;
    flex-direction: column;
    width: 292px;
    height: ${({ $height }) => $height}px;
    border-radius: 16px;
    background: #fff;
    box-shadow: 0 1px 2px rgba(0, 0, 0, 0.5);
`;

const CardTitle = styled.h3`
    margin: 0;
    padding: 7px 8px 6px;
    font-size: 12px;
    font-weight: 400;
    line-height: 16px;
    color: ${purple};
`;

const CardToggle = styled(CardTitle)`
    display: flex;
    align-items: center;
    gap: 9px;
    padding: 13px 8px 10px 14px;
`;

const CardText = styled.div<{ $clip?: boolean }>`
    padding-left: 8px;
    font-size: 9.95px;
    font-weight: 300;
    line-height: 14.88px;
    white-space: nowrap;
    overflow: ${({ $clip }) => ($clip ? 'hidden' : 'visible')};

    b {
        font-weight: 700;
    }
`;

const Steps = styled.ol`
    margin: 0;
    padding-left: 35px;
`;

const CardScroll = styled.div`
    display: flex;
    align-items: center;
    flex: none;
    height: 17px;
    margin-top: auto;
    padding: 0 6px;
    background: #f1f1f1;
`;

const CardThumb = styled.div`
    width: 177px;
    height: 13px;
    margin-left: 7px;
    background: #c1c1c1;
`;

const CanvasSide = styled.div`
    display: flex;
    flex-direction: column;
    align-items: flex-end;
    justify-content: space-between;
    padding: 22px 15px 14px 0;
    z-index: 1;
`;

const FullScreen = styled.button`
    margin-right: 8px;
    background: none;
    color: ${purple};
    font-size: 14px;
    font-weight: 500;
    line-height: 20px;
    letter-spacing: -0.05px;
`;

const Controls = styled.div`
    display: flex;
    flex-direction: column;
    gap: 1px;
    width: 26px;
    background: #e8e8ec;
    box-shadow: 0 0 2px 1px rgba(0, 0, 0, 0.08);

    button {
        display: flex;
        justify-content: center;
        align-items: center;
        height: 26px;
        background: #fff;
    }
`;
